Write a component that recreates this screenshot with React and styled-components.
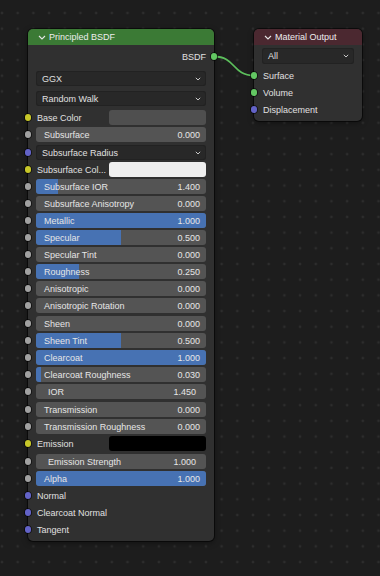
import React from 'react';
import styled, { createGlobalStyle } from 'styled-components';

const Global = createGlobalStyle`
  html, body { margin: 0; padding: 0; background: #1d1d1d; }
  body { font-family: "Liberation Sans", Arial, sans-serif; }
`;

const Canvas = styled.div`
  position: relative;
  width: 380px;
  height: 576px;
  overflow: hidden;
  background-color: #1d1d1d;
  background-image: radial-gradient(circle, #2d2d2d 1.1px, transparent 1.7px);
  background-size: 15.7px 15.7px;
  background-position: -5.85px 5.15px;
`;

const Links = styled.svg`
  position: absolute;
  left: 0;
  top: 0;
  width: 380px;
  height: 576px;
  pointer-events: none;
`;

const Node = styled.div`
  position: absolute;
  left: ${(p) => p.$x}px;
  top: ${(p) => p.$y}px;
  width: ${(p) => p.$w}px;
  background: #303030;
  border-radius: 5px;
  box-shadow: 0 0 0 1px rgba(0, 0, 0, 0.55), 0 2px 6px rgba(0, 0, 0, 0.4);
  font-size: 9px;
  color: #e0e0e0;
`;

const Header = styled.div`
  height: 16px;
  display: flex;
  align-items: center;
  gap: 3px;
  padding-left: 10px;
  background: ${(p) => p.$color};
  border-radius: 5px 5px 0 0;
  color: #ededed;
  font-size: 9px;
`;

const Body = styled.div`
  display: flex;
  flex-direction: column;
  padding: 3px 0 3px 0;
`;

const Row = styled.div`
  position: relative;
  height: ${(p) => p.$h || 17}px;
  margin-top: ${(p) => p.$mt || 0}px;
  display: flex;
  align-items: center;
  justify-content: ${(p) => (p.$right ? 'flex-end' : 'flex-start')};
  padding: 0 8px;
`;

const Socket = styled.span`
  position: absolute;
  ${(p) => (p.$out ? 'right: -3.25px;' : 'left: -3.25px;')}
  top: 50%;
  width: 6.5px;
  height: 6.5px;
  margin-top: -3.25px;
  border-radius: 50%;
  background: ${(p) => p.$color};
  box-shadow: 0 0 0 0.8px rgba(0, 0, 0, 0.7);
  z-index: 2;
`;

const Label = styled.span`
  white-space: nowrap;
  ${(p) => (p.$w ? `width: ${p.$w}px; flex: none;` : '')}
  padding-left: 1px;
`;

const Slider = styled.div`
  position: relative;
  flex: 1;
  height: 15px;
  border-radius: 3px;
  background: #545454;
  overflow: hidden;
  display: flex;
  align-items: center;
  justify-content: space-between;
  padding: 0 ${(p) => (p.$inset ? 10 : 6)}px 0 ${(p) => (p.$inset ? 12 : 8)}px;
  color: #e6e6e6;
`;

const Fill = styled.div`
  position: absolute;
  left: 0;
  top: 0;
  bottom: 0;
  background: #4772b3;
`;

const SliderText = styled.span`
  position: relative;
  z-index: 1;
  white-space: nowrap;
`;

const Dropdown = styled.div`
  flex: 1;
  height: ${(p) => p.$h || 15}px;
  border-radius: 3px;
  background: #282828;
  display: flex;
  align-items: center;
  justify-content: space-between;
  padding: 0 5px 0 6px;
  color: #e0e0e0;
  box-shadow: inset 0 0 0 1px #222;
`;

const Swatch = styled.div`
  flex: 1;
  height: 15px;
  border-radius: 3px;
  background: ${(p) => p.$color};
`;

const HeaderChevron = () => (
  <svg width="8" height="5" viewBox="0 0 8 5">
    <polyline points="1,1 4,4 7,1" fill="none" stroke="#e6e6e6" strokeWidth="1.1" />
  </svg>
);

const DropChevron = () => (
  <svg width="6" height="4" viewBox="0 0 6 4">
    <polyline points="0.8,0.8 3,3 5.2,0.8" fill="none" stroke="#c8c8c8" strokeWidth="1" />
  </svg>
);

const GREY = '#a1a1a1';
const YELLOW = '#c7c729';
const PURPLE = '#6363c7';
const GREEN = '#63c763';

const inputs = [
  { type: 'color', label: 'Base Color', color: '#4f4f4f', socket: YELLOW },
  { type: 'slider', label: 'Subsurface', value: '0.000', fill: 0 },
  { type: 'drop', label: 'Subsurface Radius', socket: PURPLE, mt: 1 },
  { type: 'color', label: 'Subsurface Col...', color: '#efefef', socket: YELLOW },
  { type: 'slider', label: 'Subsurface IOR', value: '1.400', fill: 13 },
  { type: 'slider', label: 'Subsurface Anisotropy', value: '0.000', fill: 0 },
  { type: 'slider', label: 'Metallic', value: '1.000', fill: 100 },
  { type: 'slider', label: 'Specular', value: '0.500', fill: 50 },
  { type: 'slider', label: 'Specular Tint', value: '0.000', fill: 0 },
  { type: 'slider', label: 'Roughness', value: '0.250', fill: 25 },
  { type: 'slider', label: 'Anisotropic', value: '0.000', fill: 0 },
  { type: 'slider', label: 'Anisotropic Rotation', value: '0.000', fill: 0 },
  { type: 'slider', label: 'Sheen', value: '0.000', fill: 0, mt: 1 },
  { type: 'slider', label: 'Sheen Tint', value: '0.500', fill: 50 },
  { type: 'slider', label: 'Clearcoat', value: '1.000', fill: 100 },
  { type: 'slider', label: 'Clearcoat Roughness', value: '0.030', fill: 3 },
  { type: 'field', label: 'IOR', value: '1.450' },
  { type: 'slider', label: 'Transmission', value: '0.000', fill: 0, mt: 1 },
  { type: 'slider', label: 'Transmission Roughness', value: '0.000', fill: 0 },
  { type: 'color', label: 'Emission', color: '#000000', socket: YELLOW },
  { type: 'field', label: 'Emission Strength', value: '1.000', mt: 1 },
  { type: 'slider', label: 'Alpha', value: '1.000', fill: 100 },
  { type: 'label', label: 'Normal', socket: PURPLE },
  { type: 'label', label: 'Clearcoat Normal', socket: PURPLE },
  { type: 'label', label: 'Tangent', socket: PURPLE },
];

const InputRow = ({ item }) => {
  const socket = item.socket || GREY;
  let content;
  if (item.type === 'slider' || item.type === 'field') {
    content = (
      <Slider $inset={item.type === 'field'}>
        {item.fill > 0 && <Fill style={{ width: `${item.fill}%` }} />}
        <SliderText>{item.label}</SliderText>
        <SliderText>{item.value}</SliderText>
      </Slider>
    );
  } else if (item.type === 'color') {
    content = (
      <>
        <Label $w={72}>{item.label}</Label>
        <Swatch $color={item.color} />
      </>
    );
  } else if (item.type === 'drop') {
    content = (
      <Dropdown>
        <span>{item.label}</span>
        <DropChevron />
      </Dropdown>
    );
  } else {
    content = <Label>{item.label}</Label>;
  }
  return (
    <Row $mt={item.mt}>
      <Socket $color={socket} />
      {content}
    </Row>
  );
};

export default function App() {
  return (
    <>
      <Global />
      <Canvas>
        <Links viewBox="0 0 380 576">
          <path d="M214,56.5 C236,56.5 232,75.5 254,75.5" fill="none" stroke="#5cbf5c" strokeWidth="1.8" />
        </Links>

        <Node $x={28} $y={29} $w={186}>
          <Header $color="#3b7a35">
            <HeaderChevron />
            <span>Principled BSDF</span>
          </Header>
          <Body>
            <Row $right>
              <span>BSDF</span>
              <Socket $out $color={GREEN} />
            </Row>
            <Row $h={15} $mt={6}>
              <Dropdown>
                <span>GGX</span>
                <DropChevron />
              </Dropdown>
            </Row>
            <Row $h={15} $mt={5}>
              <Dropdown>
                <span>Random Walk</span>
                <DropChevron />
              </Dropdown>
            </Row>
            <div style={{ height: 3 }} />
            {inputs.map((item) => (
              <InputRow key={item.label} item={item} />
            ))}
          </Body>
        </Node>

        <Node $x={254} $y={29} $w={108}>
          <Header $color="#4b2830">
            <HeaderChevron />
            <span>Material Output</span>
          </Header>
          <Body>
            <Row $h={16}>
              <Dropdown $h={16}>
                <span>All</span>
                <DropChevron />
              </Dropdown>
            </Row>
            <Row $mt={3}>
              <Socket $color={GREEN} />
              <Label>Surface</Label>
            </Row>
            <Row>
              <Socket $color={GREEN} />
              <Label>Volume</Label>
            </Row>
            <Row>
              <Socket $color={PURPLE} />
              <Label>Displacement</Label>
            </Row>
          </Body>
        </Node>
      </Canvas>
    </>
  );
}
